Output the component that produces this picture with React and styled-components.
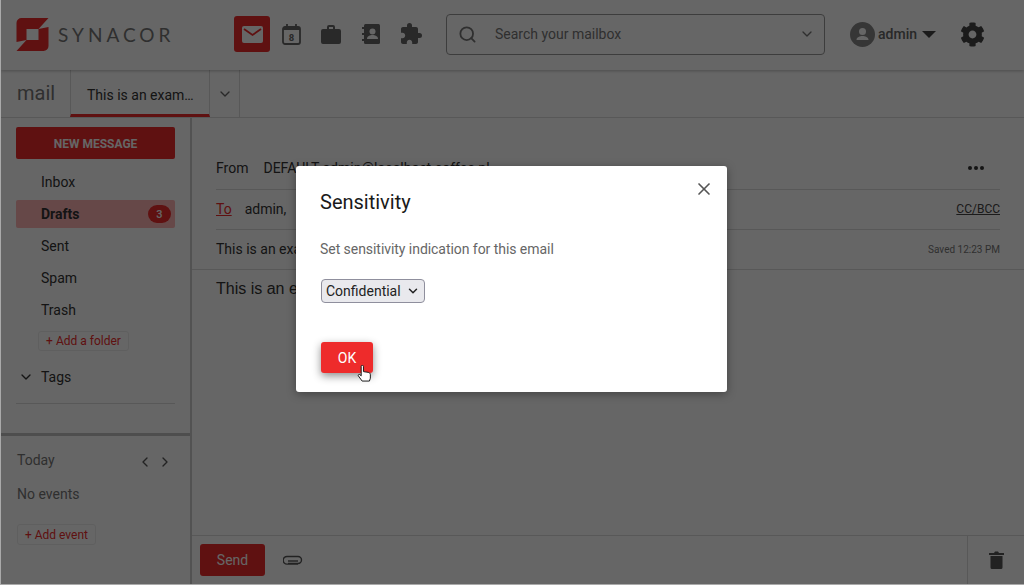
import React from 'react';
import styled, { createGlobalStyle } from 'styled-components';
import { FaCog } from 'react-icons/fa';
import { MdExtension } from 'react-icons/md';
import { ChevronDown, ChevronLeft, ChevronRight, Search, X } from 'lucide-react';

const RED = '#ee2b2b';
const ICON = '#666';

const GlobalStyle = createGlobalStyle`
  html, body { margin: 0; padding: 0; }
  body { font-family: Roboto, "Liberation Sans", sans-serif; color: #222; background: #fff; }
  * { box-sizing: border-box; }
`;

const Page = styled.div`
  position: relative;
  width: 1024px;
  height: 585px;
  overflow: hidden;
  display: flex;
  flex-direction: column;
  border-left: 1px solid #aaa;
  border-bottom: 1px solid #aaa;
`;

const Header = styled.header`
  height: 70px;
  flex: none;
  display: flex;
  align-items: center;
  padding: 0 0 2px 15px;
  box-shadow: 0 1px 3px rgba(0, 0, 0, 0.25);
  position: relative;
`;

const Brand = styled.div`
  display: flex;
  align-items: center;
  gap: 9px;
  width: 218px;
`;

const BrandName = styled.span`
  font-family: Lato, Roboto, sans-serif;
  font-size: 19px;
  font-weight: 400;
  letter-spacing: 4px;
  color: #777;
`;

const AppNav = styled.nav`
  display: flex;
  align-items: center;
`;

const AppIcon = styled.span`
  width: ${p => (p.$active ? '36px' : '40px')};
  height: 36px;
  margin-right: ${p => (p.$active ? '1px' : '0')};
  display: flex;
  align-items: center;
  justify-content: center;
  border-radius: 3px;
  color: ${ICON};
  background: ${p => (p.$active ? RED : 'transparent')};
`;

const SearchBox = styled.div`
  width: 379px;
  height: 41px;
  margin-left: 15px;
  display: flex;
  align-items: center;
  padding: 0 9px 0 11px;
  border: 1px solid #999;
  border-radius: 4px;
  color: #777;
`;

const SearchText = styled.span`
  flex: 1;
  margin-left: 18px;
  font-size: 14px;
  color: #777;
`;

const UserMenu = styled.div`
  display: flex;
  align-items: center;
  margin-left: 25px;
  width: 110px;
`;

const Avatar = styled.svg`
  width: 25px;
  height: 25px;
  flex: none;
`;

const UserName = styled.span`
  font-size: 14px;
  font-weight: 500;
  margin-left: 3px;
  color: #666;
`;

const Caret = styled.span`
  margin-left: 5px;
  width: 0;
  height: 0;
  border-left: 7px solid transparent;
  border-right: 7px solid transparent;
  border-top: 7px solid #444;
`;

const Gear = styled.span`
  display: flex;
  font-size: 25px;
  color: #444;
`;

const TabBar = styled.div`
  height: 48px;
  flex: none;
  display: flex;
  border-bottom: 1px solid #ddd;
`;

const AppTitle = styled.div`
  width: 69px;
  padding-left: 16px;
  font-size: 20px;
  line-height: 46px;
  color: #777;
`;

const Tab = styled.div`
  width: 140px;
  height: 47px;
  padding: 0 0 0 16px;
  line-height: 51px;
  font-size: 14px;
  color: #333;
  border-left: 1px solid #ddd;
  border-right: 1px solid #ddd;
  border-bottom: 3px solid ${RED};
`;

const TabMenu = styled.div`
  width: 30px;
  display: flex;
  align-items: center;
  justify-content: center;
  color: #666;
  border-right: 1px solid #ddd;
`;

const Main = styled.div`
  flex: 1;
  display: flex;
  min-height: 0;
`;

const Sidebar = styled.aside`
  width: 191px;
  flex: none;
  display: flex;
  flex-direction: column;
  border-right: 2px solid #ccc;
`;

const Folders = styled.div`
  height: 318px;
  flex: none;
  padding: 9px 15px 0;
  border-bottom: 3px solid #c4c4c4;
`;

const NewMessage = styled.button`
  width: 159px;
  height: 32px;
  display: block;
  border: 0;
  border-radius: 2px;
  padding: 1px 0 0;
  background: ${RED};
  color: #fff;
  font: 700 12px Roboto, sans-serif;
  margin-bottom: 7px;
`;

const FolderRow = styled.div`
  width: 159px;
  height: ${p => (p.$active ? '28px' : '32px')};
  margin: ${p => (p.$active ? '2px 0' : '0')};
  padding: 0 4px 0 25px;
  display: flex;
  align-items: center;
  justify-content: space-between;
  font-size: 14px;
  font-weight: ${p => (p.$active ? 700 : 400)};
  color: #333;
  background: ${p => (p.$active ? '#ffb4b4' : 'transparent')};
  border-radius: 2px;
`;

const Badge = styled.span`
  width: 23px;
  height: 18px;
  border-radius: 9px;
  display: flex;
  align-items: center;
  justify-content: center;
  background: ${RED};
  color: #fff;
  font-size: 11px;
  font-weight: 500;
`;

const GhostButton = styled.button`
  display: block;
  height: ${p => (p.$event ? '21px' : '20px')};
  width: ${p => (p.$event ? '79px' : '91px')};
  margin: ${p => (p.$event ? '0' : '5px 0 0 22px')};
  padding: 0;
  background: #fff;
  border: 1px solid #eee;
  border-radius: 3px;
  color: ${RED};
  font: 400 12px Roboto, sans-serif;
`;

const TagsRow = styled.div`
  display: flex;
  align-items: center;
  width: 159px;
  height: 53px;
  padding-bottom: 1px;
  font-size: 14px;
  color: #333;
  gap: 7px;
  border-bottom: 1px solid #ddd;
  svg { color: #333; margin-left: 2px; }
`;

const Agenda = styled.div`
  flex: 1;
  padding: 14px 16px 0;
`;

const AgendaHead = styled.div`
  display: flex;
  align-items: center;
  justify-content: space-between;
  font-size: 14px;
  color: #777;
  height: 20px;
  span { display: flex; gap: 4px; color: #555; margin-right: 1px; margin-top: 3px; }
`;

const NoEvents = styled.div`
  margin: 14px 0 20px;
  font-size: 14px;
  line-height: 20px;
  color: #777;
`;

const Compose = styled.main`
  flex: 1;
  min-width: 0;
  display: flex;
  flex-direction: column;
`;

const Fields = styled.div`
  flex: 1;
  padding-top: 31px;
`;

const FieldRow = styled.div`
  height: ${p => (p.$first ? '41px' : '40px')};
  margin: 0 24px;
  padding-bottom: ${p => (p.$first ? '3px' : '1px')};
  display: flex;
  align-items: center;
  justify-content: space-between;
  font-size: 14px;
  color: #333;
  border-bottom: 1px solid #ddd;
`;

const SubjectRow = styled.div`
  border-bottom: 1px solid #ddd;
  padding: 0 24px 1px;
  height: 40px;
  display: flex;
  align-items: center;
  justify-content: space-between;
  font-size: 14px;
  color: #333;
`;

const FieldLabel = styled.span`
  display: inline-block;
  margin-right: ${p => (p.$to ? '13px' : '15px')};
  color: ${p => (p.$to ? RED : '#333')};
  text-decoration: ${p => (p.$to ? 'underline' : 'none')};
`;

const MoreDots = styled.span`
  display: flex;
  gap: 2px;
  margin-right: 16px;
  i { width: 4px; height: 4px; border-radius: 50%; background: #333; }
`;

const SmallLink = styled.span`
  font-size: 12px;
  color: #444;
  text-decoration: underline;
`;

const Saved = styled.span`
  font-size: 10px;
  color: #777;
`;

const BodyText = styled.div`
  padding: 10px 24px;
  font: 16px/18px "Liberation Sans", Arial, sans-serif;
  color: #333;
`;

const ComposeFooter = styled.div`
  height: 49px;
  flex: none;
  display: flex;
  align-items: center;
  padding-left: 8px;
  border-top: 1px solid #ddd;
`;

const SendButton = styled.button`
  width: 65px;
  height: 32px;
  border: 0;
  border-radius: 3px;
  background: ${RED};
  color: #fff;
  font: 400 14px Roboto, sans-serif;
`;

const FooterSpacer = styled.div`
  flex: 1;
`;

const TrashCell = styled.div`
  width: 57px;
  height: 100%;
  display: flex;
  align-items: center;
  justify-content: center;
  border-left: 1px solid #ddd;
`;

const Overlay = styled.div`
  position: absolute;
  inset: 0 0 0 -1px;
  background: rgba(0, 0, 0, 0.6);
  display: flex;
  align-items: flex-start;
  justify-content: center;
  padding: 166px 1px 0 0;
`;

const Dialog = styled.div`
  position: relative;
  width: 431px;
  height: 226px;
  padding: 24px 24px 0;
  background: #fff;
  border-radius: 3px;
  box-shadow: 0 2px 10px rgba(0, 0, 0, 0.35);
`;

const DialogTitle = styled.h2`
  margin: 0;
  font-size: 20px;
  font-weight: 400;
  line-height: 24px;
  color: #1a1a1a;
`;

const DialogText = styled.p`
  margin: 25px 0 20px;
  font-size: 14px;
  line-height: 20px;
  letter-spacing: -0.05px;
  color: #666;
`;

const SelectWrap = styled.div`
  position: relative;
  width: 104px;
  height: 24px;
  margin: 0 0 39px 1px;
  svg {
    position: absolute;
    right: 5px;
    top: 5px;
    pointer-events: none;
    color: #222;
  }
`;

const SensitivitySelect = styled.select`
  appearance: none;
  display: block;
  width: 100%;
  height: 100%;
  padding: 0 0 0 4px;
  font: 14px Roboto, sans-serif;
  color: #222;
  background: #e9e9ed;
  border: 1px solid #8f8f9d;
  border-radius: 4px;
`;

const OkButton = styled.button`
  display: block;
  width: 52px;
  height: 31px;
  margin-left: 1px;
  border: 0;
  border-radius: 3px;
  background: ${RED};
  color: #fff;
  font: 400 14px Roboto, sans-serif;
  box-shadow: 0 3px 8px rgba(0, 0, 0, 0.45);
`;

const CloseIcon = styled.span`
  position: absolute;
  top: 13px;
  right: 13px;
  display: flex;
  color: #555;
`;

const HandCursor = styled.svg`
  position: absolute;
  left: 61px;
  top: 199px;
`;

const Logo = () => (
  <svg width="33" height="33" viewBox="0 0 32 33">
    <path fill={RED} d="M5 0H32L22 11H10V22L0 24V5A5 5 0 0 1 5 0zM27 33H0L10 22H22V11L32 9V28A5 5 0 0 1 27 33z" />
  </svg>
);

const MailIcon = () => (
  <svg width="21" height="17" viewBox="0 0 21 17">
    <rect width="21" height="17" rx="2" fill="#fff" />
    <path d="M2 3l8.5 6L19 3" fill="none" stroke={RED} strokeWidth="1.8" />
  </svg>
);

const CalendarIcon = () => (
  <svg width="19" height="21" viewBox="0 0 19 21">
    <rect x="1" y="3" width="17" height="17" rx="2" fill="none" stroke={ICON} strokeWidth="1.8" />
    <path d="M1 3h17v3H1z" fill={ICON} />
    <path d="M5 0v4M14 0v4" stroke={ICON} strokeWidth="1.8" />
    <text x="9.5" y="17" fontSize="9.5" fontWeight="700" textAnchor="middle" fill={ICON} fontFamily="Roboto">8</text>
  </svg>
);

const BriefcaseIcon = () => (
  <svg width="20" height="19" viewBox="0 0 20 19">
    <path fill={ICON} d="M6 4V2a2 2 0 0 1 2-2h4a2 2 0 0 1 2 2v2h4a2 2 0 0 1 2 2v11a2 2 0 0 1-2 2H2a2 2 0 0 1-2-2V6a2 2 0 0 1 2-2zm2 0h4V2H8z" />
  </svg>
);

const ContactsIcon = () => (
  <svg width="18" height="20" viewBox="0 0 18 20">
    <rect x="2" y="0" width="16" height="20" rx="1.5" fill={ICON} />
    <path d="M0 4h4M0 10h4M0 16h4" stroke={ICON} strokeWidth="2" />
    <circle cx="10.5" cy="7.5" r="3" fill="#fff" />
    <path d="M5 15c0-3 3-4 5.5-4s5.500 1 5.500 4z" fill="#fff" />
  </svg>
);

const PaperclipIcon = () => (
  <svg width="20" height="11" viewBox="0 0 20 11" fill="none" stroke="#555" strokeWidth="1.4" style={{ marginLeft: 18 }}>
    <path d="M5 8.5h10a3.4 3.4 0 0 0 0-7H4a3 3 0 0 0 0 7.6h11" />
    <path d="M15 6H5" />
  </svg>
);

const TrashIcon = () => (
  <svg width="15" height="18" viewBox="0 0 15 18">
    <path fill="#555" d="M0 2h5l1-1.5h3l1 1.5h5v2H0zM1.5 5h12v11.5a1.5 1.5 0 0 1-1.5 1.5H3a1.5 1.5 0 0 1-1.5-1.5z" />
  </svg>
);

const App = () => (
  <>
    <GlobalStyle />
    <Page>
      <Header>
        <Brand>
          <Logo />
          <BrandName>SYNACOR</BrandName>
        </Brand>
        <AppNav>
          <AppIcon $active><MailIcon /></AppIcon>
          <AppIcon><CalendarIcon /></AppIcon>
          <AppIcon><BriefcaseIcon /></AppIcon>
          <AppIcon><ContactsIcon /></AppIcon>
          <AppIcon><MdExtension size={24} /></AppIcon>
        </AppNav>
        <SearchBox>
          <Search size={19} strokeWidth={2.3} />
          <SearchText>Search your mailbox</SearchText>
          <ChevronDown size={16} />
        </SearchBox>
        <UserMenu>
          <Avatar viewBox="0 0 25 25">
            <circle cx="12.5" cy="12.5" r="12.5" fill="#888" />
            <circle cx="12.5" cy="9.5" r="3.5" fill="#fff" />
            <path d="M6.5 18c0-3 3.5-4 6-4s6 1 6 4z" fill="#fff" />
          </Avatar>
          <UserName>admin</UserName>
          <Caret />
        </UserMenu>
        <Gear><FaCog /></Gear>
      </Header>
      <TabBar>
        <AppTitle>mail</AppTitle>
        <Tab>This is an exam…</Tab>
        <TabMenu><ChevronDown size={16} /></TabMenu>
      </TabBar>
      <Main>
        <Sidebar>
          <Folders>
            <NewMessage>NEW MESSAGE</NewMessage>
            <FolderRow>Inbox</FolderRow>
            <FolderRow $active>Drafts<Badge>3</Badge></FolderRow>
            <FolderRow>Sent</FolderRow>
            <FolderRow>Spam</FolderRow>
            <FolderRow>Trash</FolderRow>
            <GhostButton>+ Add a folder</GhostButton>
            <TagsRow><ChevronDown size={16} strokeWidth={2} />Tags</TagsRow>
          </Folders>
          <Agenda>
            <AgendaHead>
              Today
              <span><ChevronLeft size={16} /><ChevronRight size={16} /></span>
            </AgendaHead>
            <NoEvents>No events</NoEvents>
            <GhostButton $event>+ Add event</GhostButton>
          </Agenda>
        </Sidebar>
        <Compose>
          <Fields>
            <FieldRow $first>
              <span><FieldLabel>From</FieldLabel>DEFAULT admin@localhost.coffee.pl</span>
              <MoreDots><i /><i /><i /></MoreDots>
            </FieldRow>
            <FieldRow>
              <span><FieldLabel $to>To</FieldLabel>admin,</span>
              <SmallLink>CC/BCC</SmallLink>
            </FieldRow>
            <SubjectRow>
              <span>This is an example</span>
              <Saved>Saved 12:23 PM</Saved>
            </SubjectRow>
            <BodyText>This is an example</BodyText>
          </Fields>
          <ComposeFooter>
            <SendButton>Send</SendButton>
            <PaperclipIcon />
            <FooterSpacer />
            <TrashCell><TrashIcon /></TrashCell>
          </ComposeFooter>
        </Compose>
      </Main>
      <Overlay>
        <Dialog>
          <CloseIcon><X size={20} /></CloseIcon>
          <DialogTitle>Sensitivity</DialogTitle>
          <DialogText>Set sensitivity indication for this email</DialogText>
          <SelectWrap>
            <SensitivitySelect defaultValue="Confidential">
              <option>Confidential</option>
              <option>Internal</option>
              <option>Public</option>
            </SensitivitySelect>
            <ChevronDown size={14} strokeWidth={2.5} />
          </SelectWrap>
          <OkButton>OK</OkButton>
          <HandCursor width="15" height="17" viewBox="0 0 15 18">
            <path fill="#fff" stroke="#111" strokeWidth="1" d="M4 1.5a1.2 1.2 0 0 1 2.4 0V7l5 .8c1.5.3 2.3 1 2.3 2.5V14l-1 3H5L1 11.500c-.6-1 .6-2 1.600-1.300L4 11.500z" />
          </HandCursor>
        </Dialog>
      </Overlay>
    </Page>
  </>
);

export default App;
